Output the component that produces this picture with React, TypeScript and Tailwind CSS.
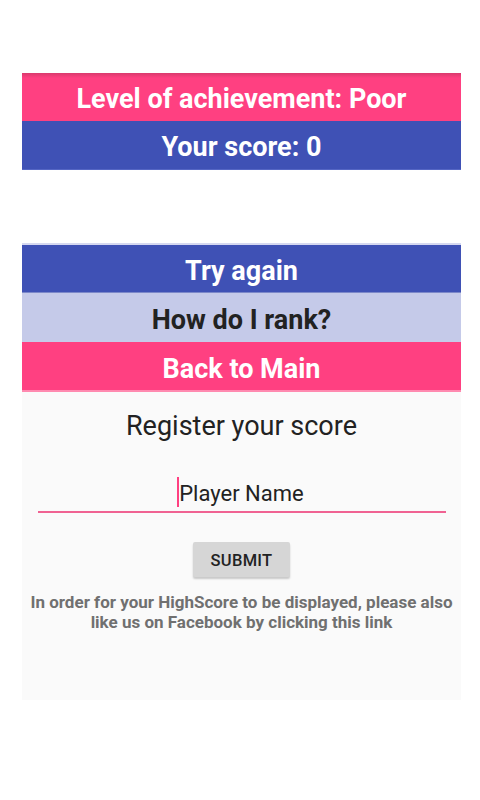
import React from "react";

export default function App() {
  return (
    <div className="w-[480px] h-[800px] bg-white" style={{ fontFamily: "Roboto, 'Noto Sans', sans-serif" }}>
      <div className="pt-[73px] px-[22px] w-[483px]">
        <div className="flex flex-col w-[439px]">
          <div className="h-[48px] pt-[5px] flex items-center justify-center text-white font-bold text-[27px] bg-gradient-to-b from-[#d93a6d] to-[#ff4081] [background-size:100%_5px] [background-repeat:no-repeat]" style={{ backgroundColor: "#ff4081" }}>
            Level of achievement: Poor
          </div>
          <div className="h-[49px] pt-[5px] bg-[#3f51b5] border-b-[1px] border-[#5566c4] flex items-center justify-center text-white font-bold text-[27px]">
            Your score: 0
          </div>
        </div>
        <div className="mt-[73px] flex flex-col w-[439px]">
          <div className="h-[2px] bg-[#d5d8f0]" />
          <div className="h-[48px] pt-[5px] bg-[#3f51b5] border-b border-[#7c88c9] flex items-center justify-center text-white font-bold text-[27px]">
            Try again
          </div>
          <div className="h-[49px] pt-[6px] bg-[#c5cae9] flex items-center justify-center text-[#222222] font-bold text-[27px]">
            How do I rank?
          </div>
          <div className="h-[48px] pt-[7px] bg-[#ff4081] flex items-center justify-center text-white font-bold text-[27px]">
            Back to Main
          </div>
          <div className="h-[2px] bg-[#ff8ab0]" />
          <div className="h-[308px] bg-[#fafafa] flex flex-col items-center">
            <div className="mt-[16px] text-[27px] text-[#222222] leading-[36px]">Register your score</div>
            <div className="mt-[34px] w-[408px] self-center relative">
              <div className="flex justify-center text-[22px] text-[#222222] leading-[28px] pt-[2px] pb-[3px]">
                <span className="relative">
                  <span className="absolute left-[-2px] top-[-3px] w-[2px] h-[30px] bg-[#ff4081]" />
                  Player Name
                </span>
              </div>
              <div className="h-[2px] bg-[#f06292]" />
            </div>
            <div className="mt-[29px] w-[97px] h-[35px] pt-[3px] bg-[#d6d6d6] rounded-[2px] shadow-[0_2px_2px_rgba(0,0,0,0.2)] flex items-center justify-center text-[16.5px] font-medium text-[#222222] tracking-[0.3px]">
              SUBMIT
            </div>
            <div className="mt-[15px] text-[17px] font-bold text-[#707070] text-center leading-[20px] whitespace-nowrap">
              In order for your HighScore to be displayed, please also
              <br />
              like us on Facebook by clicking this link
            </div>
          </div>
        </div>
      </div>
    </div>
  );
}
